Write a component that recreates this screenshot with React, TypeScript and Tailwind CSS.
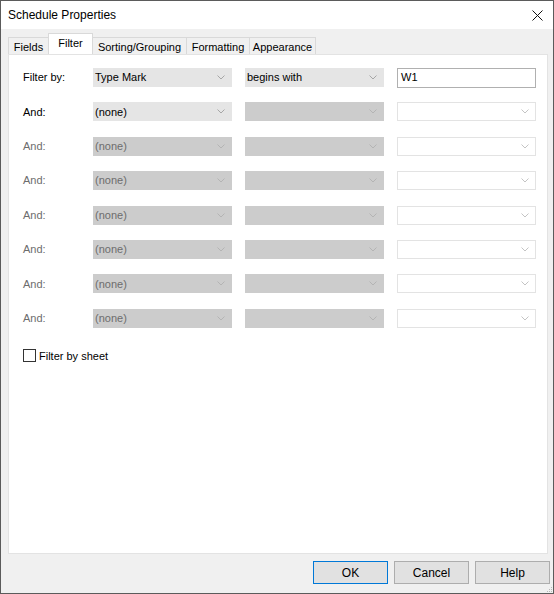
import React from 'react';

const Chevron: React.FC<{ color: string }> = ({ color }) => (
    <svg width="8" height="5" viewBox="0 0 8 5" className="shrink-0">
        <path d="M0.5 0.5L4 4L7.5 0.5" fill="none" stroke={color} strokeWidth="1" />
    </svg>
);

const Combo: React.FC<{ text?: string; enabled: boolean }> = ({ text, enabled }) => (
    <div
        className={`w-[139px] h-[19px] flex items-center justify-between pl-[1px] pr-[6px] border ${
            enabled ? 'bg-[#e5e5e5] border-[#e5e5e5] text-black' : 'bg-[#cccccc] border-[#cccccc] text-[#6d6d6d]'
        }`}
    >
        <span>{text}</span>
        <Chevron color={enabled ? '#a6a6a6' : '#b4b4b4'} />
    </div>
);

const rows = [0, 1, 2, 3, 4, 5, 6, 7];

const App: React.FC = () => {
    return (
        <div
            className="w-[554px] h-[594px] bg-[#f0f0f0] border border-[#5b5b5b] flex flex-col text-[11px] text-black"
            style={{ fontFamily: '"Liberation Sans", Arial, sans-serif' }}
        >
            {/* Title bar */}
            <div className="h-[28px] bg-white flex items-center justify-between pl-[7px] pr-[10px] shrink-0">
                <span className="text-[12px]">Schedule Properties</span>
                <svg width="11" height="11" viewBox="0 0 11 11">
                    <path d="M0.5 0.5L10.5 10.5M10.5 0.5L0.5 10.5" stroke="#111" strokeWidth="1" />
                </svg>
            </div>

            {/* Tabs */}
            <div className="flex items-end pl-[7px] h-[25px] shrink-0">
                <div className="w-[40px] h-[17px] pt-[2px] flex items-center justify-center border border-b-0 border-r-0 border-[#d9d9d9] bg-[#f0f0f0]">Fields</div>
                <div className="w-[45px] h-[21px] flex items-center justify-center bg-white border border-b-0 border-[#d9d9d9] pb-[2px]">Filter</div>
                <div className="w-[94px] h-[17px] pt-[2px] flex items-center justify-center border border-b-0 border-l-0 border-[#d9d9d9] bg-[#f0f0f0]">Sorting/Grouping</div>
                <div className="w-[63px] h-[17px] pt-[2px] flex items-center justify-center border border-b-0 border-l-0 border-[#d9d9d9] bg-[#f0f0f0]">Formatting</div>
                <div className="w-[66px] h-[17px] pt-[2px] flex items-center justify-center border border-b-0 border-l-0 border-[#d9d9d9] bg-[#f0f0f0]">Appearance</div>
            </div>

            {/* Panel */}
            <div className="ml-[7px] mr-[5px] h-[500px] bg-white border border-[#e3e3e3] pt-[13px] pl-[14px] flex flex-col shrink-0">
                <div className="flex flex-col gap-[15.4px]">
                    {rows.map((i) => {
                        const first = i === 0;
                        const second = i === 1;
                        return (
                            <div key={i} className="flex items-center h-[19px]">
                                <span className={`w-[70px] ${first || second ? 'text-black' : 'text-[#6d6d6d]'}`}>
                                    {first ? 'Filter by:' : 'And:'}
                                </span>
                                <Combo text={first ? 'Type Mark' : '(none)'} enabled={first || second} />
                                <div className="w-[13px]" />
                                <Combo text={first ? 'begins with' : ''} enabled={first} />
                                <div className="w-[13px]" />
                                {first ? (
                                    <div className="w-[139px] h-[20px] bg-white border border-[#b0b0b0] flex items-center pl-[3px]">W1</div>
                                ) : (
                                    <div className="w-[139px] h-[19px] bg-white border border-[#e3e3e3] flex items-center justify-end pr-[6px]">
                                        <Chevron color="#c4c4c4" />
                                    </div>
                                )}
                            </div>
                        );
                    })}
                </div>

                <label className="flex items-center mt-[20px] gap-[3px]">
                    <span className="w-[13px] h-[13px] border border-[#333333] bg-white" />
                    <span>Filter by sheet</span>
                </label>
            </div>

            {/* Buttons */}
            <div className="flex justify-end gap-[6px] pr-[3px] pt-[7px] relative flex-1">
                <button className="w-[75px] h-[23px] bg-[#e1e1e1] border border-[#0078d7] text-[12px]">OK</button>
                <button className="w-[75px] h-[23px] bg-[#e1e1e1] border border-[#adadad] text-[12px]">Cancel</button>
                <button className="w-[75px] h-[23px] bg-[#e1e1e1] border border-[#adadad] text-[12px]">Help</button>
                <svg width="7" height="7" viewBox="0 0 7 7" className="absolute right-0 bottom-0">
                    <rect x="5" y="1" width="1" height="1" fill="#b8b8b8" />
                    <rect x="3" y="3" width="1" height="1" fill="#b8b8b8" />
                    <rect x="5" y="3" width="1" height="1" fill="#b8b8b8" />
                    <rect x="1" y="5" width="1" height="1" fill="#b8b8b8" />
                    <rect x="3" y="5" width="1" height="1" fill="#b8b8b8" />
                    <rect x="5" y="5" width="1" height="1" fill="#b8b8b8" />
                </svg>
            </div>
        </div>
    );
};

export default App;
